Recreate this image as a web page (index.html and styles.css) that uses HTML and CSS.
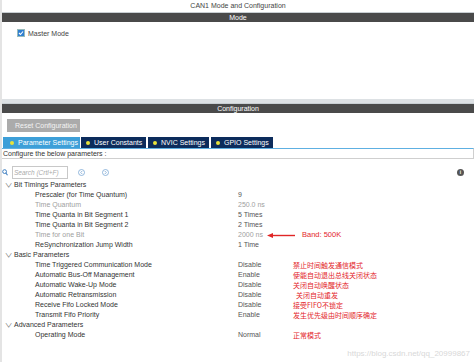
FILE: index.html
```html
<!DOCTYPE html>
<html>
<head>
<meta charset="utf-8">
<link rel="stylesheet" href="styles.css">
</head>
<body>
<div class="page">
  <div class="title">CAN1 Mode and Configuration</div>
  <div class="bar">Mode</div>
  <div class="mode-body">
    <label class="check"><span class="box"><svg width="6" height="6" viewBox="0 0 6 6"><path d="M1 3 L2.5 4.5 L5 1.5" fill="none" stroke="#fff" stroke-width="1.1"/></svg></span>Master Mode</label>
  </div>
  <div class="sep"></div>
  <div class="bar">Configuration</div>
  <div class="cfg">
    <div class="reset">Reset Configuration</div>
    <div class="tabs">
      <div class="tab active"><span class="dot"></span>Parameter Settings</div>
      <div class="tab t2"><span class="dot"></span>User Constants</div>
      <div class="tab t3"><span class="dot"></span>NVIC Settings</div>
      <div class="tab t4"><span class="dot"></span>GPIO Settings</div>
    </div>
    <div class="configure">Configure the below parameters :</div>
    <div class="search-row">
      <svg class="mag" width="6" height="7" viewBox="0 0 6 7"><circle cx="2.6" cy="2.6" r="1.9" fill="none" stroke="#3f7fc0" stroke-width="1"/><path d="M3.9 4 L5.5 6.2" stroke="#3f7fc0" stroke-width="1.1"/></svg>
      <div class="search">Search (Crtl+F)</div>
      <svg class="circ c1" width="7" height="7" viewBox="0 0 7 7"><circle cx="3.5" cy="3.5" r="3" fill="none" stroke="#7aa6d4" stroke-width="0.8"/><path d="M4.2 2 L2.7 3.5 L4.2 5" fill="none" stroke="#7aa6d4" stroke-width="0.8"/></svg>
      <svg class="circ c2" width="7" height="7" viewBox="0 0 7 7"><circle cx="3.5" cy="3.5" r="3" fill="none" stroke="#7aa6d4" stroke-width="0.8"/><path d="M2.8 2 L4.3 3.5 L2.8 5" fill="none" stroke="#7aa6d4" stroke-width="0.8"/></svg>
      <span class="info">i</span>
    </div>
    <div class="tree">
      <div class="row group"><span class="chev">&#x2228;</span>Bit Timings Parameters</div>
      <div class="row"><span class="lbl">Prescaler (for Time Quantum)</span><span class="val">9</span></div>
      <div class="row dis"><span class="lbl">Time Quantum</span><span class="val">250.0 ns</span></div>
      <div class="row"><span class="lbl">Time Quanta in Bit Segment 1</span><span class="val">5 Times</span></div>
      <div class="row"><span class="lbl">Time Quanta in Bit Segment 2</span><span class="val">2 Times</span></div>
      <div class="row dis"><span class="lbl">Time for one Bit</span><span class="val">2000 ns</span><span class="note arrow-note"><svg class="arrow" width="29" height="5" viewBox="0 0 29 5"><path d="M0 2.5 L6 0 L6 5 Z" fill="#e02626"/><path d="M5 2.5 L28 2.5" stroke="#e02626" stroke-width="1.4"/></svg><span class="band">Band: 500K</span></span></div>
      <div class="row"><span class="lbl">ReSynchronization Jump Width</span><span class="val">1 Time</span></div>
      <div class="row group"><span class="chev">&#x2228;</span>Basic Parameters</div>
      <div class="row"><span class="lbl">Time Triggered Communication Mode</span><span class="val">Disable</span><span class="note">禁止时间触发通信模式</span></div>
      <div class="row"><span class="lbl">Automatic Bus-Off Management</span><span class="val">Enable</span><span class="note">使能自动退出总线关闭状态</span></div>
      <div class="row"><span class="lbl">Automatic Wake-Up Mode</span><span class="val">Disable</span><span class="note">关闭自动唤醒状态</span></div>
      <div class="row"><span class="lbl">Automatic Retransmission</span><span class="val">Disable</span><span class="note n2">关闭自动重发</span></div>
      <div class="row"><span class="lbl">Receive Fifo Locked Mode</span><span class="val">Disable</span><span class="note">接受FIFO不锁定</span></div>
      <div class="row"><span class="lbl">Transmit Fifo Priority</span><span class="val">Enable</span><span class="note">发生优先级由时间顺序确定</span></div>
      <div class="row group"><span class="chev">&#x2228;</span>Advanced Parameters</div>
      <div class="row"><span class="lbl">Operating Mode</span><span class="val">Normal</span><span class="note">正常模式</span></div>
    </div>
    <div class="mark">https://blog.csdn.net/qq_20999867</div>
  </div>
</div>
</body>
</html>
```
FILE: styles.css
```css
html, body {
  margin: 0;
  padding: 0;
  background: #fff;
}
body {
  font-family: "Liberation Sans", Arial, "Noto Sans CJK SC", sans-serif;
  font-size: 7px;
  color: #333;
  width: 474px;
  height: 362px;
  overflow: hidden;
}
.page {
  border-left: 2px solid #e4e4e4;
  height: 362px;
  box-sizing: border-box;
}
.title {
  height: 12px;
  line-height: 11px;
  text-align: center;
  color: #444;
}
.bar {
  height: 10px;
  box-sizing: border-box;
  border-top: 1px solid #c9cfd3;
  background: #4a4a4a;
  color: #fff;
  text-align: center;
  line-height: 9px;
}
.mode-body {
  height: 77px;
  padding: 6px 0 0 15px;
  box-sizing: border-box;
}
.check {
  display: flex;
  align-items: center;
  gap: 3px;
  height: 10px;
  color: #444;
}
.box {
  width: 6px;
  height: 6px;
  background: #2f7fd0;
  display: flex;
  align-items: center;
  justify-content: center;
  border: 0.5px solid #9bb;
}
.sep {
  height: 4px;
  background: #dde1e4;
}
.cfg {
  padding-top: 6px;
}
.reset {
  margin-left: 5px;
  width: 73px;
  height: 13px;
  background: #ababab;
  color: #f4f4f4;
  line-height: 13px;
  box-sizing: border-box;
  padding-left: 8px;
  font-size: 7px;
}
.tabs {
  display: flex;
  margin-top: 5px;
  margin-left: 1px;
  gap: 1px;
  height: 11px;
}
.tab {
  background: #0c2c5c;
  color: #fff;
  display: flex;
  align-items: center;
  gap: 4px;
  padding-left: 5px;
  box-sizing: border-box;
  line-height: 11px;
}
.tab.active { background: #3d9fd8; width: 77px; padding-left: 7px; }
.t2 { width: 65px; }
.t3 { width: 61px; margin-left: 1px; }
.t4 { width: 62px; margin-left: 1px; }
.dot {
  width: 4px;
  height: 4px;
  border-radius: 50%;
  background: #e8e33a;
  flex: none;
}
.configure {
  border-top: 1px solid #5eb0e2;
  border-bottom: 1px solid #cfcfcf;
  border-right: 1px solid #cfcfcf;
  height: 11px;
  box-sizing: border-box;
  line-height: 10px;
  padding-left: 1px;
  color: #333;
}
.search-row {
  display: flex;
  align-items: center;
  height: 21px;
  padding-top: 6px;
  box-sizing: border-box;
  padding-bottom: 1px;
}
.mag { margin-left: 0px; flex: none; }
.search {
  margin-left: 4px;
  width: 56px;
  height: 13px;
  box-sizing: border-box;
  border: 1px solid #c8c8c8;
  color: #aaa;
  font-style: italic;
  line-height: 11px;
  padding-left: 1px;
  font-size: 6.5px;
}
.circ { flex: none; }
.c1 { margin-left: 10px; }
.c2 { margin-left: 17px; }
.info {
  margin-left: auto;
  margin-right: 10px;
  width: 7px;
  height: 7px;
  border-radius: 50%;
  background: #555;
  color: #fff;
  font-size: 5px;
  font-weight: bold;
  line-height: 7px;
  text-align: center;
}
.row {
  display: grid;
  grid-template-columns: 236px 55px auto;
  height: 10px;
  line-height: 10px;
  white-space: nowrap;
}
.row .lbl { padding-left: 33px; }
.row.group {
  display: flex;
  padding-left: 4px;
}
.chev {
  width: 8px;
  color: #777;
  font-size: 6px;
  transform: scaleX(1.3);
}
.row .val { color: #555; }
.row.dis .lbl, .row.dis .val { color: #a0a0a0; }
.note {
  color: #e3262b;
  font-family: "Noto Sans CJK SC", sans-serif;
  font-size: 7px;
}
.n2 { padding-left: 3px; }
.arrow-note {
  display: flex;
  align-items: center;
  margin-left: -26px;
  font-family: "Liberation Sans", Arial, sans-serif;
}
.band { margin-left: 6px; font-size: 7.5px; }
.mark {
  text-align: right;
  margin-top: 9px;
  margin-right: 4px;
  color: #d8d8d8;
  font-size: 8px;
}
```
